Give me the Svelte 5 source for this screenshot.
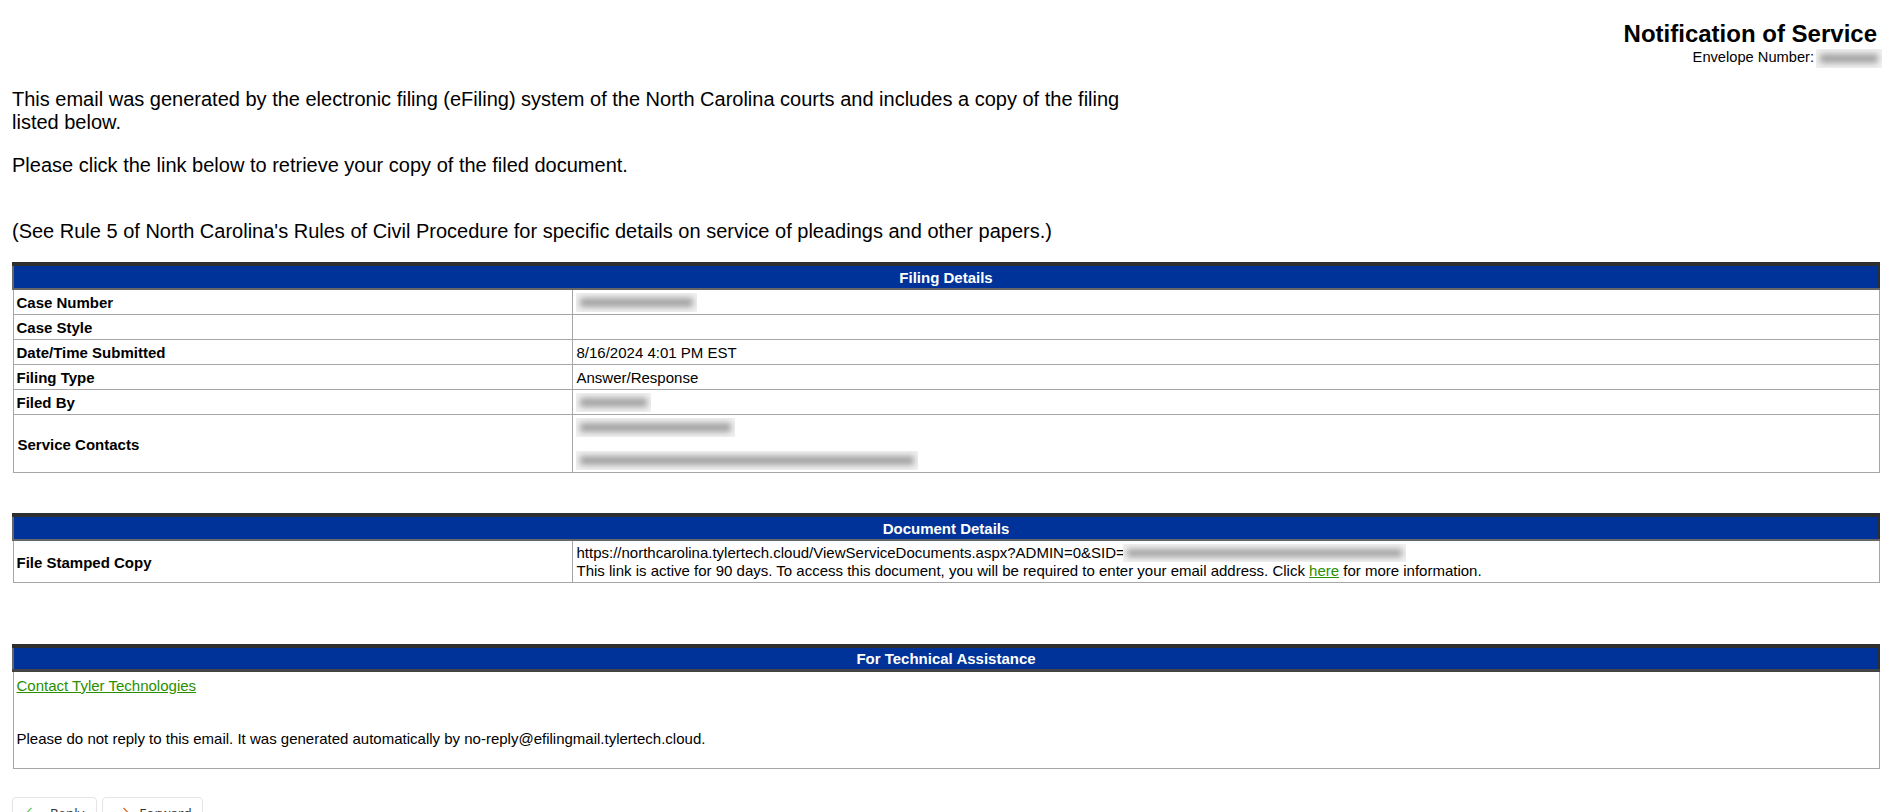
<script>
  const filing = [
    { label: 'Case Number', blur: 'case' },
    { label: 'Case Style', value: '' },
    { label: 'Date/Time Submitted', value: '8/16/2024 4:01 PM EST' },
    { label: 'Filing Type', value: 'Answer/Response' },
    { label: 'Filed By', blur: 'filer' }
  ]
</script>

<div class="page">
  <header class="title">
    <div class="name">Notification of Service</div>
    <div class="envelope">Envelope Number:<span class="smear env"></span></div>
  </header>

  <div class="intro">
    <p>This email was generated by the electronic filing (eFiling) system of the North Carolina courts and includes a copy of the filing listed below.</p>
    <p>Please click the link below to retrieve your copy of the filed document.</p>
    <p class="rule">(See Rule 5 of North Carolina's Rules of Civil Procedure for specific details on service of pleadings and other papers.)</p>
  </div>

  <table class="details">
    <colgroup><col class="col-label" /><col /></colgroup>
    <thead><tr><th colspan="2">Filing Details</th></tr></thead>
    <tbody>
      {#each filing as row}
        <tr>
          <td class="label">{row.label}</td>
          <td class="value">
            {#if row.blur}<span class="smear {row.blur}"></span>{:else}{row.value}{/if}
          </td>
        </tr>
      {/each}
      <tr>
        <td class="label nudge">Service Contacts</td>
        <td class="value contacts">
          <div><span class="smear contact-a"></span></div>
          <div><span class="smear contact-b"></span></div>
        </td>
      </tr>
    </tbody>
  </table>

  <table class="details doc">
    <colgroup><col class="col-label" /><col /></colgroup>
    <thead><tr><th colspan="2">Document Details</th></tr></thead>
    <tbody>
      <tr>
        <td class="label lower">File Stamped Copy</td>
        <td class="value link-cell">
          https://northcarolina.tylertech.cloud/ViewServiceDocuments.aspx?ADMIN=0&amp;SID=<span class="smear sid"></span><br />
          This link is active for 90 days. To access this document, you will be required to enter your email address. Click <a href="#here">here</a> for more information.
        </td>
      </tr>
    </tbody>
  </table>

  <table class="details tech">
    <thead><tr><th>For Technical Assistance</th></tr></thead>
    <tbody>
      <tr>
        <td class="help">
          <a href="#contact">Contact Tyler Technologies</a>
          <p>Please do not reply to this email. It was generated automatically by no-reply@efilingmail.tylertech.cloud.</p>
        </td>
      </tr>
    </tbody>
  </table>

  <div class="actions">
    <button class="reply">
      <svg width="20" height="16" viewBox="0 0 20 16" fill="none" stroke="#62c95f" stroke-width="1.2"><path d="M16 8H2.5M7.5 3 2.5 8l5 5" /></svg>
      Reply
    </button>
    <button class="forward">
      <svg width="20" height="16" viewBox="0 0 20 16" fill="none" stroke="#d9651c" stroke-width="1.2"><path d="M2 8h13.5M10.5 3l5 5-5 5" /></svg>
      Forward
    </button>
  </div>
</div>

<style>
  :global(body) {
    margin: 0;
    background: #fff;
    color: #000;
    font-family: "Liberation Sans", Arial, sans-serif;
  }

  .page {
    height: 812px;
    overflow: hidden;
    padding: 0 13px 0 12px;
    box-sizing: border-box;
  }

  .title {
    text-align: right;
    padding: 19px 3px 0 0;
    height: 53px;
  }
  .name {
    font-size: 24px;
    font-weight: 700;
    line-height: 29px;
  }
  .envelope {
    font-size: 14.67px;
    line-height: 18px;
  }

  .intro {
    width: 1130px;
    padding-top: 16px;
    font-size: 20px;
    line-height: 23px;
  }
  .intro p { margin: 0 0 20px; }
  .intro p.rule { margin: 43px 0 19px; width: 1300px; }

  table.details {
    width: 100%;
    border-collapse: collapse;
    font-size: 15px;
    table-layout: fixed;
  }
  .col-label { width: 559px; }
  th {
    background: #003399;
    color: #fff;
    font-weight: 700;
    height: 22px;
    padding: 0;
    border-top: 4px solid #2e2e2e;
    border-bottom: 2px solid #666;
    border-left: 2px solid #666;
    border-right: 2px solid #2e2e2e;
  }
  .tech th { height: 21px; border-bottom: 3px solid #444; }
  td {
    border: 1px solid #a6a6a6;
    height: 24px;
    padding: 0 3px;
    line-height: 17px;
  }
  td.label { font-weight: 700; }
  td.value { padding-left: 4px; }
  td.value .smear { margin-left: -1px; }
  td.nudge { padding-left: 4px; padding-top: 2px; }
  td.lower { padding-top: 2px; }
  td.contacts { padding-top: 0; padding-bottom: 0; }
  td.contacts div { height: 25px; display: flex; align-items: center; }
  td.contacts div + div { margin-top: 8px; }
  td.contacts div:last-child { height: 24px; }
  .doc { margin-top: 40px; }
  .tech { margin-top: 61px; }
  .link-cell { line-height: 18px; padding-top: 3px; padding-bottom: 2px; }
  .help { padding-top: 5px; height: 91px; vertical-align: top; }
  .help p { margin: 36px 0 0; }
  a { color: #2a8f00; }

  .smear {
    position: relative;
    display: inline-block;
    height: 19px;
    vertical-align: middle;
    overflow: hidden;
    background: #f1f1f1;
  }
  .smear::after {
    content: '';
    position: absolute;
    inset: 5px 4px;
    background: #a0a0a0;
    filter: blur(3px);
  }
  .env { width: 66px; margin: 0 -5px 0 2px; }
  .case { width: 121px; }
  .filer { width: 75px; }
  .contact-a { width: 159px; }
  .contact-b { width: 342px; }
  td.value .sid { width: 283px; height: 18px; margin-left: -2px; vertical-align: top; }

  .actions {
    display: flex;
    gap: 5px;
    padding-top: 28px;
  }
  button {
    display: flex;
    align-items: center;
    gap: 6px;
    height: 32px;
    padding: 0 10px;
    background: #fff;
    border: 1px solid #e4e4e4;
    border-radius: 4px;
    font-family: "Open Sans", sans-serif;
    font-size: 13.5px;
    color: #333;
    box-sizing: border-box;
  }
  button.reply { padding: 0 12px 0 11px; }
</style>
